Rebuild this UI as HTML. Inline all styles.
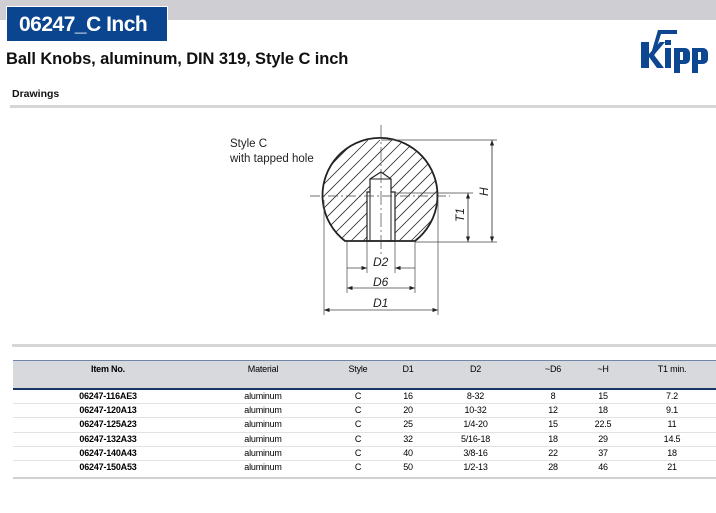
<!DOCTYPE html>
<html><head><meta charset="utf-8"><style>
body{margin:0;width:716px;height:513px;background:#fff;font-family:"Liberation Sans",sans-serif;position:relative;overflow:hidden}
.abs{position:absolute}
table{border-collapse:collapse;font-size:9px;font-family:"Liberation Sans",sans-serif}
td{text-align:center;padding:0;height:13.2px;line-height:13px;border-bottom:1px solid #e2e2e2;letter-spacing:-0.2px}
td.b{font-weight:bold}
tr.l td{border-bottom:2px solid #d0d0d0;height:16px;vertical-align:top}
</style></head><body>
<div class="abs" style="left:0;top:0;width:716px;height:20px;background:#cfcfd3"></div>
<div class="abs" style="left:6px;top:6px;width:162px;height:36px;background:#0b4590;border:1px solid #fff;box-sizing:border-box;color:#fff;font-weight:bold;font-size:21px;line-height:36px;padding-left:12px;letter-spacing:-0.5px">06247_C Inch</div>
<div class="abs" style="left:6px;top:50px;font-weight:bold;font-size:16.5px;letter-spacing:-0.1px;color:#111">Ball Knobs, aluminum, DIN 319, Style C inch</div>
<div class="abs" style="left:12px;top:88px;font-weight:bold;font-size:10.5px;color:#111">Drawings</div>
<div class="abs" style="left:10px;top:105px;width:706px;height:3px;background:#d6d6d8"></div>
<div class="abs" style="left:12px;top:344px;width:704px;height:3px;background:#d6d6d8"></div>
<svg class="abs" style="left:638px;top:28px" width="72" height="46" viewBox="0 0 72 46">
<g fill="#0d4691">
<rect x="3" y="14" width="8" height="26"/>
<path d="M11 26 L22 14 L27 14 L16 27 L26 40 L19 40 L11 29Z"/>
<path d="M13 26 L20 2 L39 2 L39 6 L23 6 L16 28Z"/>
<rect x="27" y="20" width="6" height="20"/><rect x="27" y="12" width="6" height="5"/>
<path d="M36 20h11a5 5 0 0 1 5 5v6a5 5 0 0 1-5 5h-5v9h-6z M42 24v8h3v-8z"/>
<path d="M54 20h11a5 5 0 0 1 5 5v6a5 5 0 0 1-5 5h-5v9h-6z M60 24v8h3v-8z"/>
</g></svg>
<div class="abs" style="left:230px;top:137px;font-size:11.5px;line-height:15px;color:#222">Style C<br>with tapped hole</div>
<svg class="abs" style="left:0;top:0" width="716" height="340" font-family="Liberation Sans" font-style="italic" font-size="12">
<defs><clipPath id="c"><path d="M345 241 A57.5 57.5 0 1 1 415 241Z"/></clipPath>
<marker id="a" markerWidth="8" markerHeight="6" refX="8" refY="3" orient="auto"><path d="M0 0L8 3L0 6Z" fill="#222"/></marker></defs>
<g clip-path="url(#c)" stroke="#333" stroke-width="0.8">
<line x1="280" y1="300" x2="440" y2="140"/><line x1="292" y1="300" x2="452" y2="140"/><line x1="304" y1="300" x2="464" y2="140"/><line x1="316" y1="300" x2="476" y2="140"/><line x1="328" y1="300" x2="488" y2="140"/><line x1="340" y1="300" x2="500" y2="140"/><line x1="352" y1="300" x2="512" y2="140"/><line x1="364" y1="300" x2="524" y2="140"/><line x1="376" y1="300" x2="536" y2="140"/><line x1="388" y1="300" x2="548" y2="140"/><line x1="268" y1="300" x2="428" y2="140"/><line x1="256" y1="300" x2="416" y2="140"/><line x1="244" y1="300" x2="404" y2="140"/><line x1="232" y1="300" x2="392" y2="140"/><line x1="220" y1="300" x2="380" y2="140"/><line x1="208" y1="300" x2="368" y2="140"/><line x1="196" y1="300" x2="356" y2="140"/>
</g>
<path d="M367 241V192H370V179L381 172L391 179V192H395V241Z" fill="#fff" stroke="#222" stroke-width="1.2"/>
<path d="M370 192V241M391 192V241M370 179H391" stroke="#222" stroke-width="1"/>
<path d="M345 241 A57.5 57.5 0 1 1 415 241Z" fill="none" stroke="#222" stroke-width="1.8"/>
<g stroke="#444" stroke-width="0.7" fill="none">
<line x1="381" y1="125" x2="381" y2="255" stroke-dasharray="14 3 2 3"/>
<line x1="310" y1="196" x2="450" y2="196" stroke-dasharray="10 3 2 3"/>
<line x1="381" y1="140" x2="497" y2="140"/><line x1="415" y1="242" x2="497" y2="242"/><line x1="395" y1="193" x2="473" y2="193"/>
<line x1="492" y1="140" x2="492" y2="242"/><line x1="468" y1="193" x2="468" y2="242"/>
<line x1="324" y1="200" x2="324" y2="315"/><line x1="438" y1="200" x2="438" y2="315"/>
<line x1="347" y1="242" x2="347" y2="293"/><line x1="415" y1="242" x2="415" y2="293"/>
<line x1="367" y1="242" x2="367" y2="273"/><line x1="395" y1="242" x2="395" y2="273"/>
<line x1="347" y1="268" x2="367" y2="268" marker-end="url(#a)"/><line x1="415" y1="268" x2="395" y2="268" marker-end="url(#a)"/>
<line x1="381" y1="288" x2="347" y2="288" marker-end="url(#a)"/><line x1="381" y1="288" x2="415" y2="288" marker-end="url(#a)"/>
<line x1="381" y1="310" x2="324" y2="310" marker-end="url(#a)"/><line x1="381" y1="310" x2="438" y2="310" marker-end="url(#a)"/>
<line x1="492" y1="190" x2="492" y2="140" marker-end="url(#a)"/><line x1="492" y1="190" x2="492" y2="242" marker-end="url(#a)"/>
<line x1="468" y1="218" x2="468" y2="193" marker-end="url(#a)"/><line x1="468" y1="218" x2="468" y2="242" marker-end="url(#a)"/>
</g>
<g fill="#222">
<text x="373" y="266">D2</text><text x="373" y="286">D6</text><text x="373" y="307">D1</text>
<text transform="translate(488,196) rotate(-90)">H</text><text transform="translate(464,222) rotate(-90)">T1</text>
</g></svg>
<div class="abs" style="left:13px;top:360px;width:703px;height:27px;background:#d8d9dd;border-top:1px solid #6f86aa;border-bottom:2px solid #1b3566"></div>
<table class="abs" style="left:13px;top:360px;width:703px">
<colgroup><col style="width:190px"><col style="width:120px"><col style="width:70px"><col style="width:30px"><col style="width:105px"><col style="width:50px"><col style="width:50px"><col></colgroup>
<tr style="height:30px"><td class="b" style="vertical-align:top;padding-top:3px;border:0">Item No.</td><td style="vertical-align:top;padding-top:3px;border:0">Material</td><td style="vertical-align:top;padding-top:3px;border:0">Style</td><td style="vertical-align:top;padding-top:3px;border:0">D1</td><td style="vertical-align:top;padding-top:3px;border:0">D2</td><td style="vertical-align:top;padding-top:3px;border:0">~D6</td><td style="vertical-align:top;padding-top:3px;border:0">~H</td><td style="vertical-align:top;padding-top:3px;border:0">T1 min.</td></tr>
<tr><td class="b">06247-116AE3</td><td>aluminum</td><td>C</td><td>16</td><td>8-32</td><td>8</td><td>15</td><td>7.2</td></tr>
<tr><td class="b">06247-120A13</td><td>aluminum</td><td>C</td><td>20</td><td>10-32</td><td>12</td><td>18</td><td>9.1</td></tr>
<tr><td class="b">06247-125A23</td><td>aluminum</td><td>C</td><td>25</td><td>1/4-20</td><td>15</td><td>22.5</td><td>11</td></tr>
<tr><td class="b">06247-132A33</td><td>aluminum</td><td>C</td><td>32</td><td>5/16-18</td><td>18</td><td>29</td><td>14.5</td></tr>
<tr><td class="b">06247-140A43</td><td>aluminum</td><td>C</td><td>40</td><td>3/8-16</td><td>22</td><td>37</td><td>18</td></tr>
<tr class="l"><td class="b">06247-150A53</td><td>aluminum</td><td>C</td><td>50</td><td>1/2-13</td><td>28</td><td>46</td><td>21</td></tr>
</table>
</body></html>
